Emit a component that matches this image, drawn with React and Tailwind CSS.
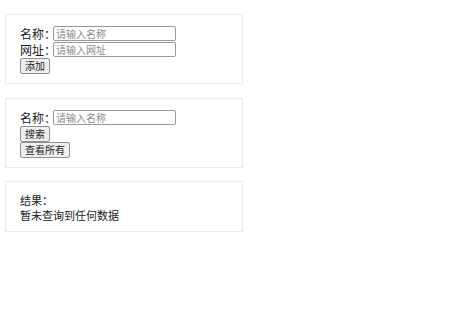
import React from "react";

const font = { fontFamily: '"Noto Sans CJK SC", "Noto Sans", sans-serif' };

function Row({ label, placeholder }) {
  return (
    <div className="flex items-center h-[15px] mb-[1px]">
      <span className="text-[12px] leading-[15px] text-[#1a1a1a] w-[33px] shrink-0 whitespace-nowrap">{label}</span>
      <input
        placeholder={placeholder}
        className="w-[123px] h-[15px] border border-[#999999] rounded-[2px] px-[2px] text-[10px] placeholder:text-[#8a8a8a] outline-none"
      />
    </div>
  );
}

function Btn({ children }) {
  return (
    <button className="block h-[16px] px-[4px] text-[10px] leading-[14px] border border-[#8f8f8f] rounded-[2px] bg-[#efefef] text-[#1a1a1a] whitespace-nowrap">
      {children}
    </button>
  );
}

export default function App() {
  return (
    <div className="bg-white w-[474px] h-[324px] pt-[14px] pl-[5px]" style={font}>
      <div className="w-[238px] border border-[#ebebeb] pl-[14px] pt-[11px] pb-[9px] mb-[14px]">
        <Row label="名称：" placeholder="请输入名称" />
        <Row label="网址：" placeholder="请输入网址" />
        <Btn>添加</Btn>
      </div>
      <div className="w-[238px] border border-[#ebebeb] pl-[14px] pt-[11px] pb-[9px] mb-[13px]">
        <Row label="名称：" placeholder="请输入名称" />
        <Btn>搜索</Btn>
        <Btn>查看所有</Btn>
      </div>
      <div className="w-[238px] border border-[#ebebeb] pl-[14px] pt-[11px] pb-[8px] text-[11px] leading-[15px] text-[#1a1a1a]">
        <div>结果：</div>
        <div>暂未查询到任何数据</div>
      </div>
    </div>
  );
}
